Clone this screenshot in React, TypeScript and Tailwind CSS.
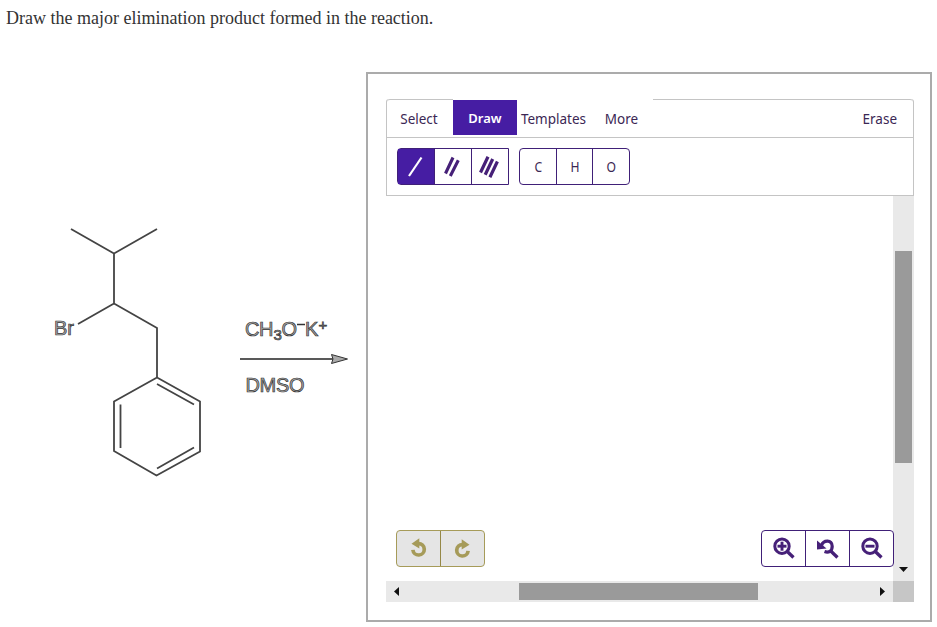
import React, { type ReactNode } from 'react'

const tools = [
    { label: 'Select', className: 'w-[66px] border-t border-[#c4c4c4] pt-0.5 pr-0.5 rounded-tl-[3px]' },
    { label: 'Draw', className: 'mt-px h-[35px] w-16 bg-[#461da3] pt-0.5 text-[13px] font-semibold text-white' },
    { label: 'Templates', className: 'w-[73px] pt-0.5' },
    { label: 'More', className: 'w-[63px] pt-0.5' },
]

const bonds = [1, 2, 3]
const atoms = ['C', 'H', 'O']

const BondIcon = ({ count }: { count: number }) => (
    <svg width="24" height="28" viewBox="0 0 24 28" fill="none" stroke="currentColor">
        {count === 1 && <path d="M5 23 17.500 4.500" strokeWidth="2.200" />}
        {count === 2 && <path d="M4.500 20.500 12 4.500M9.300 23 17.300 7.200" strokeWidth="3.100" />}
        {count === 3 && <path d="M2.500 19.500 10 3.700M7.200 21.800 14.700 6M11.900 24.200 19.400 8.500" strokeWidth="3.200" />}
    </svg>
)

const UndoIcon = ({ flip = false }: { flip?: boolean }) => (
    <svg width="18" height="20" viewBox="0 0 18 20" className={flip ? '-translate-x-px -scale-x-100' : '-translate-y-px'}>
        <path d="M8.500 5.600A5.700 5.700 0 1 1 2.900 11.800" fill="none" stroke="currentColor" strokeWidth="3.700" />
        <path d="M1.500 5.800 9.300 0.300V10.500Z" fill="currentColor" />
    </svg>
)

const ZoomIcon = ({ type }: { type: 'in' | 'reset' | 'out' }) => (
    <svg width="24" height="24" viewBox="0 0 24 24" fill="none" stroke="currentColor">
        {type === 'reset' ? (
            <>
                <path d="M5.500 8.500C7.500 2.500 16.200 2.500 16.200 9.200C16.200 14.500 12.500 16 8.500 14.600" strokeWidth="3.200" />
                <path d="M1 3.500V12.500L10.500 11.500Z" fill="currentColor" stroke="none" />
            </>
        ) : (
            <>
                <circle cx="10" cy="9.200" r="7.200" strokeWidth="3" />
                <path d="M5.500 9.200H14.500" strokeWidth="2.900" />
                {type === 'in' && <path d="M10 4.700V13.700" strokeWidth="2.900" />}
            </>
        )}
        <path d="M14.500 13.700 21.500 20.500" strokeWidth="3.300" />
    </svg>
)

const ButtonGroup = ({ children, className }: { children: ReactNode; className: string }) => (
    <div className={`flex h-[37px] border ${className}`}>{children}</div>
)

const Reaction = () => (
    <svg width="366" height="300" viewBox="0 200 366 300" className="mt-[200px] shrink-0">
        <g fill="none" stroke="#444" strokeWidth="1.800">
            <path d="M71 229 114 253.500 157 229M114 253.500V303.500M78 324 114 303.500 157 328V377.500" />
            <path d="M157 377.500 200 401.500V451.500L156.500 475.500 114 451V401.500Z" />
            <path d="M157 384 194 404.500M120.500 404.500V448M157 468.500 194 447.500" />
        </g>
        <path d="M240 359H334" stroke="#222" strokeWidth="1.500" />
        <path d="M331.500 354.500 347.500 359 331.500 363.500 333 359Z" fill="#aaa" stroke="#333" />
        <g className="font-['Liberation_Sans']" fill="#aaa" stroke="#333" strokeWidth="0.700" fontSize="20">
            <text x="54" y="334.500" textLength="20">Br</text>
            <text x="245" y="336" textLength="28.500">CH</text>
            <text x="273.500" y="340" fontSize="15">3</text>
            <text x="281.500" y="336">O</text>
            <text x="305" y="336">K</text>
            <text x="318.500" y="330" fontSize="15">+</text>
            <text x="245.500" y="391.500" textLength="59">DMSO</text>
        </g>
        <path d="M297 324.500H305" stroke="#333" strokeWidth="1.500" />
    </svg>
)

const Toolbar = () => (
    <div className="h-[97px] border-r border-b border-l border-[#c4c4c4] rounded-t-[3px]">
        <div className="flex h-[39px] border-b border-[#c4c4c4]">
            {tools.map((tool) => (
                <button key={tool.label} className={`flex items-center justify-center ${tool.className}`}>
                    {tool.label}
                </button>
            ))}
            <div className="flex flex-1 items-center justify-end rounded-tr-[3px] border-t border-[#c4c4c4] pt-0.5 pr-4">
                <button>Erase</button>
            </div>
        </div>
        <div className="flex gap-2.5 pt-[10px] pl-[10px]">
            <ButtonGroup className="w-28 rounded-l border-[#402078]">
                {bonds.map((count) => (
                    <button
                        key={count}
                        className={`flex flex-1 items-center justify-center ${count === 1 ? 'bg-[#461da3] text-white' : 'border-l border-[#402078] text-[#462078]'}`}
                    >
                        <BondIcon count={count} />
                    </button>
                ))}
            </ButtonGroup>
            <ButtonGroup className="w-[111px] rounded border-[#402078]">
                {atoms.map((atom) => (
                    <button key={atom} className="flex flex-1 items-center justify-center border-l border-[#402078] pt-0.5 text-[13.5px] first:border-l-0">
                        <span className="scale-x-90">{atom}</span>
                    </button>
                ))}
            </ButtonGroup>
        </div>
    </div>
)

const Editor = () => (
    <div className="mt-[72px] h-[550px] w-[566px] shrink-0 border-2 border-[#ababab] pt-[25px] pl-[18px] font-['Noto_Sans',sans-serif] text-[13.5px] text-[#3b2754]">
        <div className="w-[528px]">
            <Toolbar />
            <div className="flex h-[385px]">
                <div className="z-10 flex w-[507px] items-end justify-between pb-3.5 pl-2.5">
                    <ButtonGroup className="w-[89px] rounded border-[#a69b59] bg-[#e5e5e5] text-[#a69b59]">
                        <button className="flex w-11 items-center justify-center border-r border-[#958847]"><UndoIcon /></button>
                        <button className="flex flex-1 items-center justify-center"><UndoIcon flip /></button>
                    </ButtonGroup>
                    <ButtonGroup className="-mr-px w-[133px] rounded border-[#402078] bg-white text-[#462078]">
                        <button className="flex w-[43px] items-center justify-center"><ZoomIcon type="in" /></button>
                        <button className="flex w-11 items-center justify-center border-l border-[#402078]"><ZoomIcon type="reset" /></button>
                        <button className="flex w-11 items-center justify-center border-l border-[#402078]"><ZoomIcon type="out" /></button>
                    </ButtonGroup>
                </div>
                {/* Vertical scrollbar */}
                <div className="flex w-[21px] flex-col items-center justify-between bg-[#e9e9e9] pt-[55px] pb-[9px]">
                    <div className="h-[212px] w-[17px] bg-[#9a9a9a]" />
                    <svg width="9" height="5" viewBox="0 0 9 5"><path d="M0 0H9L4.500 5Z" fill="#111" /></svg>
                </div>
            </div>
            {/* Horizontal scrollbar */}
            <div className="flex h-[21px] bg-[#e9e9e9]">
                <div className="flex w-[507px] items-center justify-between pr-2 pl-2">
                    <svg width="5" height="9" viewBox="0 0 5 9"><path d="M5 0V9L0 4.500Z" fill="#111" /></svg>
                    <div className="mr-[2px] h-[17px] w-[239px] bg-[#9a9a9a]" />
                    <svg width="5" height="9" viewBox="0 0 5 9"><path d="M0 0V9L5 4.500Z" fill="#111" /></svg>
                </div>
                <div className="w-[21px] bg-[#c6c6c6]" />
            </div>
        </div>
    </div>
)

export default function App() {
    return (
        <main className="relative flex h-[627px] w-[937px] overflow-hidden bg-white">
            <h1 className="absolute top-[6px] left-[6px] font-['Liberation_Serif',serif] text-[18px] leading-6 whitespace-nowrap text-[#333]">
                Draw the major elimination product formed in the reaction.
            </h1>
            <Reaction />
            <Editor />
        </main>
    )
}
